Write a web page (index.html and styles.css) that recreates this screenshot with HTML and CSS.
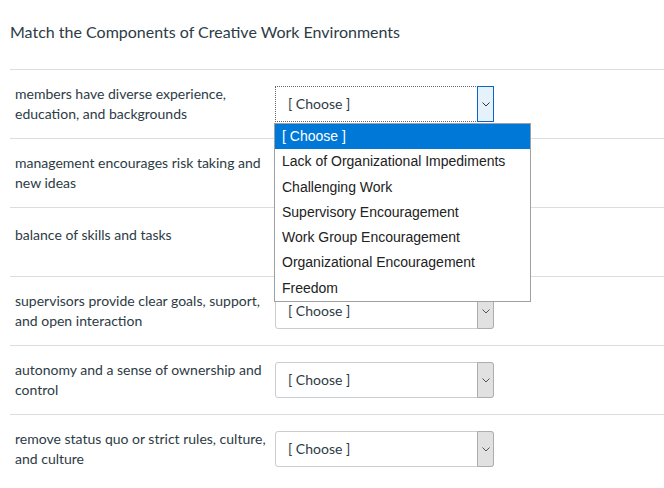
FILE: index.html
```html
<!DOCTYPE html>
<html lang="en">
<head>
    <meta charset="UTF-8">
    <meta name="viewport" content="width=device-width, initial-scale=1.0">
    <title>Matching Question</title>
    <link rel="stylesheet" href="styles.css">
</head>
<body>
    <div class="question">
        <h2 class="question-title">Match the Components of Creative Work Environments</h2>

        <div class="answers">
            <div class="answer">
                <div class="answer-text">members have diverse experience, education, and backgrounds</div>
                <div class="select-box is-open">
                    <span class="select-value">[ Choose ]</span>
                    <span class="select-arrow"><svg width="8" height="5" viewBox="0 0 8 5"><polyline points="0.5,0.5 4,4 7.5,0.5" fill="none" stroke="#333" stroke-width="1"/></svg></span>
                    <ul class="dropdown">
                        <li class="selected">[ Choose ]</li>
                        <li>Lack of Organizational Impediments</li>
                        <li>Challenging Work</li>
                        <li>Supervisory Encouragement</li>
                        <li>Work Group Encouragement</li>
                        <li>Organizational Encouragement</li>
                        <li>Freedom</li>
                    </ul>
                </div>
            </div>

            <div class="answer">
                <div class="answer-text">management encourages risk taking and new ideas</div>
                <div class="select-box">
                    <span class="select-value">[ Choose ]</span>
                    <span class="select-arrow"><svg width="8" height="5" viewBox="0 0 8 5"><polyline points="0.5,0.5 4,4 7.5,0.5" fill="none" stroke="#555" stroke-width="1"/></svg></span>
                </div>
            </div>

            <div class="answer">
                <div class="answer-text single">balance of skills and tasks</div>
                <div class="select-box">
                    <span class="select-value">[ Choose ]</span>
                    <span class="select-arrow"><svg width="8" height="5" viewBox="0 0 8 5"><polyline points="0.5,0.5 4,4 7.5,0.5" fill="none" stroke="#555" stroke-width="1"/></svg></span>
                </div>
            </div>

            <div class="answer">
                <div class="answer-text">supervisors provide clear goals, support, and open interaction</div>
                <div class="select-box">
                    <span class="select-value">[ Choose ]</span>
                    <span class="select-arrow"><svg width="8" height="5" viewBox="0 0 8 5"><polyline points="0.5,0.5 4,4 7.5,0.5" fill="none" stroke="#555" stroke-width="1"/></svg></span>
                </div>
            </div>

            <div class="answer">
                <div class="answer-text">autonomy and a sense of ownership and control</div>
                <div class="select-box">
                    <span class="select-value">[ Choose ]</span>
                    <span class="select-arrow"><svg width="8" height="5" viewBox="0 0 8 5"><polyline points="0.5,0.5 4,4 7.5,0.5" fill="none" stroke="#555" stroke-width="1"/></svg></span>
                </div>
            </div>

            <div class="answer">
                <div class="answer-text">remove status quo or strict rules, culture, and culture</div>
                <div class="select-box">
                    <span class="select-value">[ Choose ]</span>
                    <span class="select-arrow"><svg width="8" height="5" viewBox="0 0 8 5"><polyline points="0.5,0.5 4,4 7.5,0.5" fill="none" stroke="#555" stroke-width="1"/></svg></span>
                </div>
            </div>
        </div>
    </div>
</body>
</html>
```

FILE: styles.css
```css
body {
    margin: 0;
    font-family: Lato, "Liberation Sans", sans-serif;
    color: #2d3b45;
    background: #fff;
    overflow: hidden;
}
.question-title {
    margin: 0;
    padding: 22px 10px 27px;
    font-size: 16px;
    line-height: 20px;
    font-weight: normal;
}
.answers {
    margin-left: 10px;
}
.answer {
    display: flex;
    align-items: center;
    border-top: 1px solid #ddd;
    padding: 14px 0;
    min-height: 40px;
}
.answer-text {
    align-self: flex-start;
    width: 255px;
    padding-left: 5px;
    margin-right: 5px;
    font-size: 14px;
    line-height: 20px;
}
.answer-text.single {
    padding-top: 3px;
}
.select-box {
    position: relative;
    display: flex;
    box-sizing: border-box;
    width: 219px;
    height: 36px;
    border: 1px solid #c7cdd1;
    border-radius: 3px;
    background: #fff;
}
.select-value {
    flex: 1;
    padding-left: 12px;
    font-size: 14px;
    line-height: 34px;
    color: #2d3b45;
}
.select-arrow {
    display: flex;
    align-items: center;
    justify-content: center;
    box-sizing: border-box;
    width: 17px;
    margin: -1px -1px -1px 0;
    background: #e1e1e1;
    border: 1px solid #adadad;
    border-radius: 0 3px 3px 0;
}
.select-box.is-open {
    border: 1px dotted #666;
    border-radius: 0;
}
.select-box.is-open .select-arrow {
    background: #e5f1fb;
    border: 1px solid #0a64c8;
    border-radius: 0;
}
.dropdown {
    position: absolute;
    top: 36px;
    left: -2px;
    z-index: 2;
    box-sizing: border-box;
    width: 257px;
    margin: 0;
    padding: 0;
    list-style: none;
    background: #fff;
    border: 1px solid #a0a0a0;
    font-family: "Liberation Sans", Arial, sans-serif;
    font-size: 14px;
    line-height: 25.3px;
    color: #222;
}
.dropdown li {
    padding: 0 7px;
    white-space: nowrap;
}
.dropdown li.selected {
    background: #0078d7;
    color: #fff;
}
```
